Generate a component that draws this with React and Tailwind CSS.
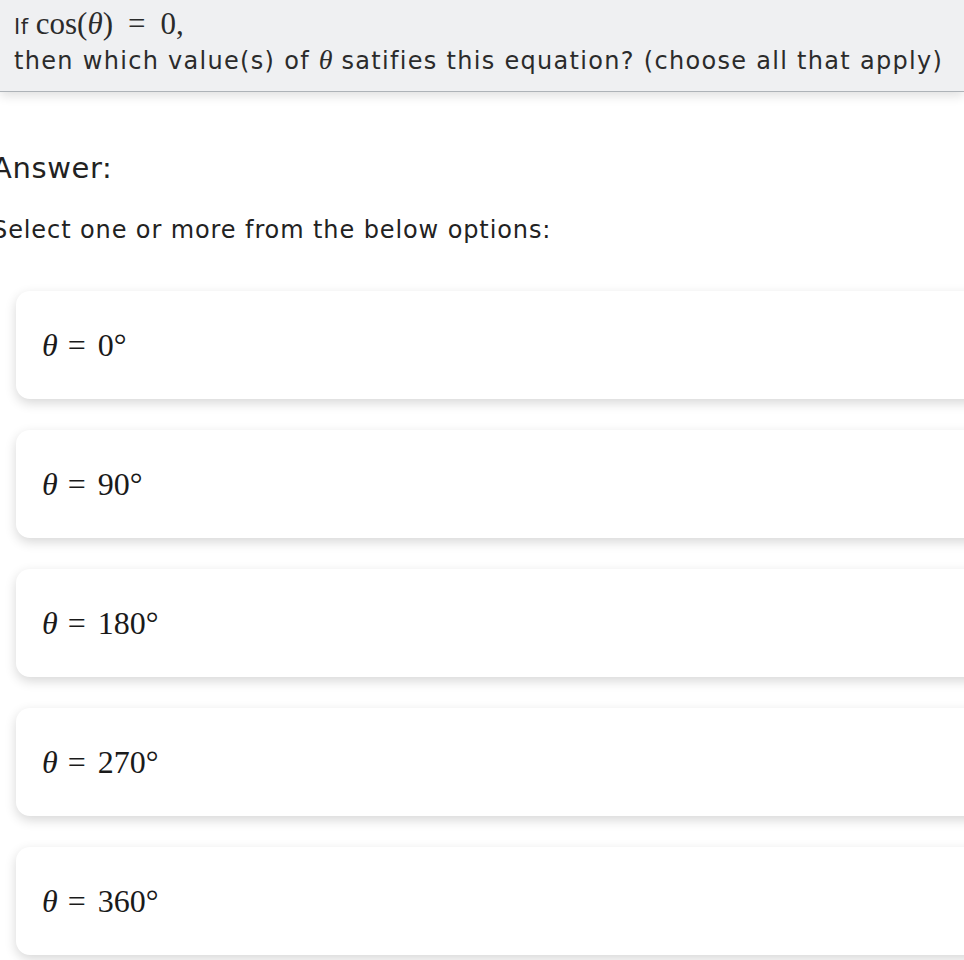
import React from "react";

function Option({ value }) {
  return (
    <div className="ml-4 mr-[-40px] h-[108px] rounded-[14px] bg-white shadow-[0_4px_12px_rgba(0,0,0,0.16)] flex items-center pl-[26px]">
      <span className="text-[32px] leading-none text-[#1a1a1a] font-['Liberation_Serif',serif]">
        <span className="italic">θ</span>
        <span className="ml-[10px] mr-[12px]">=</span>
        <span>{value}°</span>
      </span>
    </div>
  );
}

export default function App() {
  const values = ["0", "90", "180", "270", "360"];
  return (
    <div className="w-[964px] h-[960px] overflow-hidden bg-white font-['DejaVu_Sans',sans-serif] text-[#222]">
      <div className="bg-[#eff0f2] border-b border-[#aeb3b8] shadow-[0_4px_10px_rgba(0,0,0,0.12)] pl-[14px] pt-[5px] h-[92px]">
        <div className="text-[21px] leading-[38px] text-[#2b2b2b] tracking-[0.5px]">
          If{" "}
          <span className="text-[31px] tracking-normal font-['Liberation_Serif',serif]">
            cos(<span className="italic">θ</span>)<span className="mx-[15px]">=</span>0,
          </span>
        </div>
        <div className="text-[24px] leading-[28px] text-[#2b2b2b] tracking-[1.3px]">
          then which value(s) of{" "}
          <span className="italic text-[28px] tracking-normal font-['Liberation_Serif',serif]">θ</span>{" "}
          satifies this equation? (choose all that apply)
        </div>
      </div>
      <div className="ml-[-8px] mt-[56px]">
        <div className="text-[29px] leading-[40px] tracking-[0.6px]">Answer:</div>
        <div className="mt-[25px] text-[24px] leading-[34px] tracking-[0.9px]">Select one or more from the below options:</div>
      </div>
      <div className="mt-[44px] flex flex-col gap-[31px]">
        {values.map((v) => (
          <Option key={v} value={v} />
        ))}
      </div>
    </div>
  );
}
